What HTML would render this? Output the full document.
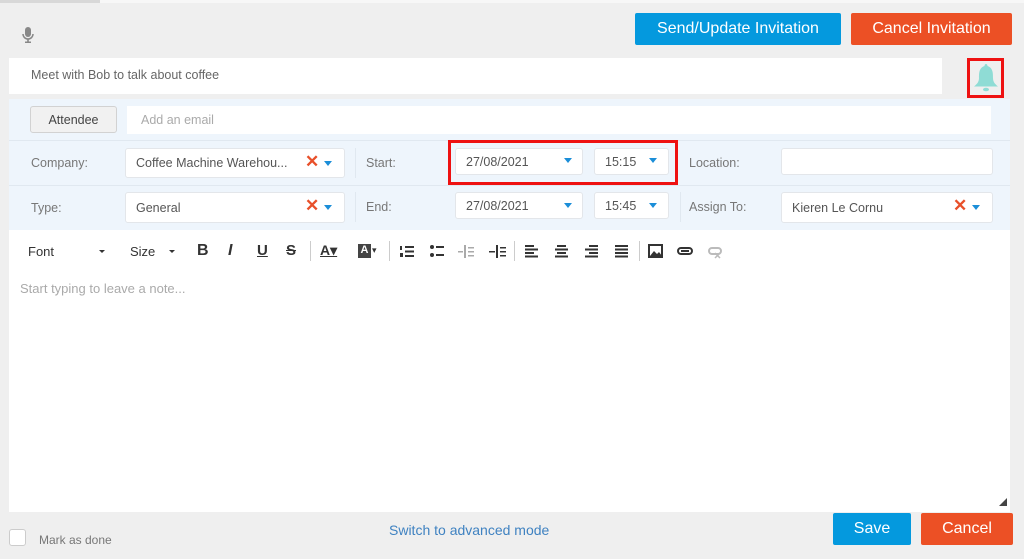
<!DOCTYPE html>
<html><head><style>
*{box-sizing:border-box;margin:0;padding:0}
body{width:1024px;height:559px;background:#efefef;font-family:"Liberation Sans",sans-serif;position:relative;overflow:hidden;color:#555}
.a{position:absolute}
.btn{position:absolute;color:#fff;font-size:16px;display:flex;align-items:center;justify-content:center;border-radius:2px}
.inp{position:absolute;background:#fff;border:1px solid #e3e6ea;border-radius:3px;font-size:12.5px;color:#555;display:flex;align-items:center;padding-left:10px}
.lbl{position:absolute;font-size:12.5px;color:#777}
.x{position:absolute;color:#e8502a;font-weight:bold;font-size:17px}
.tri{position:absolute;width:0;height:0;border-left:4.5px solid transparent;border-right:4.5px solid transparent;border-top:5px solid #1b8ed8}
.tb{position:absolute;top:244px;font-size:14px;color:#333}
</style></head><body>
<div class="a" style="left:0;top:0;width:1024px;height:3px;background:#f7f7f7"></div>
<div class="a" style="left:0;top:0;width:100px;height:3px;background:#d8d8d8"></div>
<svg class="a" style="left:22px;top:27px" width="12" height="17" viewBox="0 0 12 17"><rect x="3" y="0" width="6" height="10" rx="3" fill="#888"/><path d="M1 7a5 5 0 0 0 10 0" stroke="#888" stroke-width="1.5" fill="none"/><rect x="5.2" y="12" width="1.6" height="3" fill="#888"/><rect x="3" y="14.5" width="6" height="1.5" fill="#888"/></svg>
<div class="btn" style="left:635px;top:13px;width:206px;height:32px;background:#0499de">Send/Update Invitation</div>
<div class="btn" style="left:851px;top:13px;width:161px;height:32px;background:#ec5025">Cancel Invitation</div>
<div class="a" style="left:9px;top:58px;width:933px;height:36px;background:#fff"></div>
<div class="a" style="left:31px;top:68px;font-size:12.5px;color:#666">Meet with Bob to talk about coffee</div>
<div class="a" style="left:967px;top:58px;width:37px;height:40px;border:3px solid #ee1111"></div>
<svg class="a" style="left:973px;top:63px" width="26" height="30" viewBox="0 0 26 30"><path d="M13 1c-1 0-1.5 1-1.5 2C6 5 6 10 6 15c0 4-2 6-5 8.5h24c-3-2.5-5-4.5-5-8.5 0-5 0-10-5.5-12C14.5 2 14 1 13 1z" fill="#8fdcd5"/><ellipse cx="13" cy="26.5" rx="3" ry="1.8" fill="#8fdcd5"/></svg>
<div class="a" style="left:9px;top:99px;width:1001px;height:131px;background:#eef5fc"></div>
<div class="a" style="left:9px;top:140px;width:1001px;height:1px;background:#e0e8f0"></div>
<div class="a" style="left:9px;top:185px;width:1001px;height:1px;background:#e0e8f0"></div>
<div class="a" style="left:30px;top:106px;width:87px;height:27px;background:#f1f1f1;border:1px solid #d2d2d2;border-radius:3px;font-size:12.5px;color:#444;display:flex;align-items:center;justify-content:center">Attendee</div>
<div class="a" style="left:127px;top:106px;width:864px;height:28px;background:#fff;font-size:12.5px;color:#aaa;padding:7px 14px">Add an email</div>
<div class="lbl" style="left:31px;top:156px">Company:</div>
<div class="inp" style="left:125px;top:148px;width:220px;height:30px">Coffee Machine Warehou...</div>
<div class="x" style="left:305px;top:152px">✕</div><div class="tri" style="left:324px;top:161px"></div>
<div class="a" style="left:355px;top:148px;width:1px;height:30px;background:#e0e8f0"></div>
<div class="lbl" style="left:366px;top:156px">Start:</div>
<div class="inp" style="left:455px;top:148px;width:128px;height:27px">27/08/2021</div><div class="tri" style="left:564px;top:158px"></div>
<div class="inp" style="left:594px;top:148px;width:75px;height:27px">15:15</div><div class="tri" style="left:649px;top:158px"></div>
<div class="a" style="left:448px;top:140px;width:230px;height:45px;border:3px solid #ee1111"></div>
<div class="lbl" style="left:689px;top:156px">Location:</div>
<div class="inp" style="left:781px;top:148px;width:212px;height:27px"></div>
<div class="lbl" style="left:31px;top:201px">Type:</div>
<div class="inp" style="left:125px;top:192px;width:220px;height:31px">General</div>
<div class="x" style="left:305px;top:196px">✕</div><div class="tri" style="left:324px;top:205px"></div>
<div class="a" style="left:355px;top:192px;width:1px;height:30px;background:#e0e8f0"></div>
<div class="lbl" style="left:366px;top:200px">End:</div>
<div class="inp" style="left:455px;top:192px;width:128px;height:27px">27/08/2021</div><div class="tri" style="left:564px;top:203px"></div>
<div class="inp" style="left:594px;top:192px;width:75px;height:27px">15:45</div><div class="tri" style="left:649px;top:203px"></div>
<div class="a" style="left:680px;top:192px;width:1px;height:30px;background:#e0e8f0"></div>
<div class="lbl" style="left:689px;top:200px">Assign To:</div>
<div class="inp" style="left:781px;top:192px;width:212px;height:31px">Kieren Le Cornu</div>
<div class="x" style="left:953px;top:196px">✕</div><div class="tri" style="left:972px;top:205px"></div>
<div class="a" style="left:9px;top:230px;width:1001px;height:282px;background:#fff"></div>
<div class="tb" style="left:28px;top:244px;font-size:13px">Font</div><div class="a" style="left:99px;top:250px;border-left:3px solid transparent;border-right:3px solid transparent;border-top:3px solid #333"></div>
<div class="tb" style="left:130px;top:244px;font-size:13px">Size</div><div class="a" style="left:169px;top:250px;border-left:3px solid transparent;border-right:3px solid transparent;border-top:3px solid #333"></div>
<div class="tb" style="left:197px;top:242px;font-weight:bold;font-size:16px">B</div>
<div class="tb" style="left:228px;top:242px;font-style:italic;font-weight:bold;font-size:16px">I</div>
<div class="tb" style="left:257px;top:242px;text-decoration:underline;font-weight:bold;font-size:15px">U</div>
<div class="tb" style="left:286px;top:242px;text-decoration:line-through;font-weight:bold;font-size:15px">S</div>
<div class="a" style="left:310px;top:241px;width:1px;height:20px;background:#ccc"></div>
<div class="tb" style="left:320px;top:242px;font-weight:bold;font-size:14px;text-decoration:underline">A▾</div>
<div class="a" style="left:358px;top:244px;width:13px;height:14px;background:#444;color:#fff;font-size:11px;font-weight:bold;text-align:center">A</div><div class="tb" style="left:372px;top:245px;font-size:9px">▾</div>
<div class="a" style="left:389px;top:241px;width:1px;height:20px;background:#ccc"></div>
<svg class="a" style="left:400px;top:245px" width="130" height="13"><g fill="#333"><rect x="5" y="1" width="9" height="2"/><rect x="5" y="5.5" width="9" height="2"/><rect x="5" y="10" width="9" height="2"/><rect x="0" y="1" width="2" height="4"/><rect x="0" y="8" width="3" height="4"/><circle cx="32" cy="2" r="2"/><circle cx="32" cy="10" r="2"/><rect x="36" y="1" width="8" height="2"/><rect x="36" y="9" width="8" height="2"/></g><g fill="#aaa"><rect x="64" y="0" width="2" height="13"/><rect x="68" y="2" width="6" height="1.5"/><rect x="68" y="6" width="6" height="1.5"/><rect x="68" y="10" width="6" height="1.5"/><rect x="58" y="6" width="5" height="1.5"/></g><g fill="#333"><rect x="96" y="0" width="2" height="13"/><rect x="100" y="2" width="6" height="1.5"/><rect x="100" y="6" width="6" height="1.5"/><rect x="100" y="10" width="6" height="1.5"/><rect x="89" y="6" width="6" height="1.5"/></g></svg>
<div class="a" style="left:514px;top:241px;width:1px;height:20px;background:#ccc"></div>
<svg class="a" style="left:525px;top:245px" width="110" height="13"><g fill="#333"><rect x="0" y="0" width="9" height="2"/><rect x="0" y="3.5" width="13" height="2"/><rect x="0" y="7" width="9" height="2"/><rect x="0" y="10.5" width="13" height="2"/><rect x="32" y="0" width="9" height="2"/><rect x="30" y="3.5" width="13" height="2"/><rect x="32" y="7" width="9" height="2"/><rect x="30" y="10.5" width="13" height="2"/><rect x="64" y="0" width="9" height="2"/><rect x="60" y="3.5" width="13" height="2"/><rect x="64" y="7" width="9" height="2"/><rect x="60" y="10.5" width="13" height="2"/><rect x="90" y="0" width="13" height="2"/><rect x="90" y="3.5" width="13" height="2"/><rect x="90" y="7" width="13" height="2"/><rect x="90" y="10.5" width="13" height="2"/></g></svg>
<div class="a" style="left:639px;top:241px;width:1px;height:20px;background:#ccc"></div>
<svg class="a" style="left:648px;top:244px" width="75" height="15"><rect x="1" y="1" width="13" height="12" fill="none" stroke="#333" stroke-width="2"/><path d="M2 12l4-5 3 3 2-2 3 4z" fill="#333"/><rect x="30" y="4" width="14" height="6" rx="3" fill="none" stroke="#333" stroke-width="2"/><rect x="33" y="6" width="8" height="2" fill="#333"/><rect x="61" y="4" width="12" height="6" rx="3" fill="none" stroke="#bbb" stroke-width="2"/><path d="M67 9l5 5M72 9l-5 5" stroke="#bbb" stroke-width="1.5"/></svg>
<div class="a" style="left:20px;top:281px;font-size:13px;color:#aaa">Start typing to leave a note...</div>
<div class="a" style="left:999px;top:498px;border-left:8px solid transparent;border-bottom:8px solid #444"></div>
<div class="a" style="left:9px;top:529px;width:17px;height:17px;border:1px solid #ccc;border-radius:3px;background:#fff"></div>
<div class="a" style="left:39px;top:533px;font-size:12px;color:#777">Mark as done</div>
<div class="a" style="left:389px;top:522px;font-size:14px;color:#3f82c1">Switch to advanced mode</div>
<div class="btn" style="left:833px;top:513px;width:78px;height:32px;background:#0499de">Save</div>
<div class="btn" style="left:921px;top:513px;width:92px;height:32px;background:#ec5025">Cancel</div>
</body></html>
